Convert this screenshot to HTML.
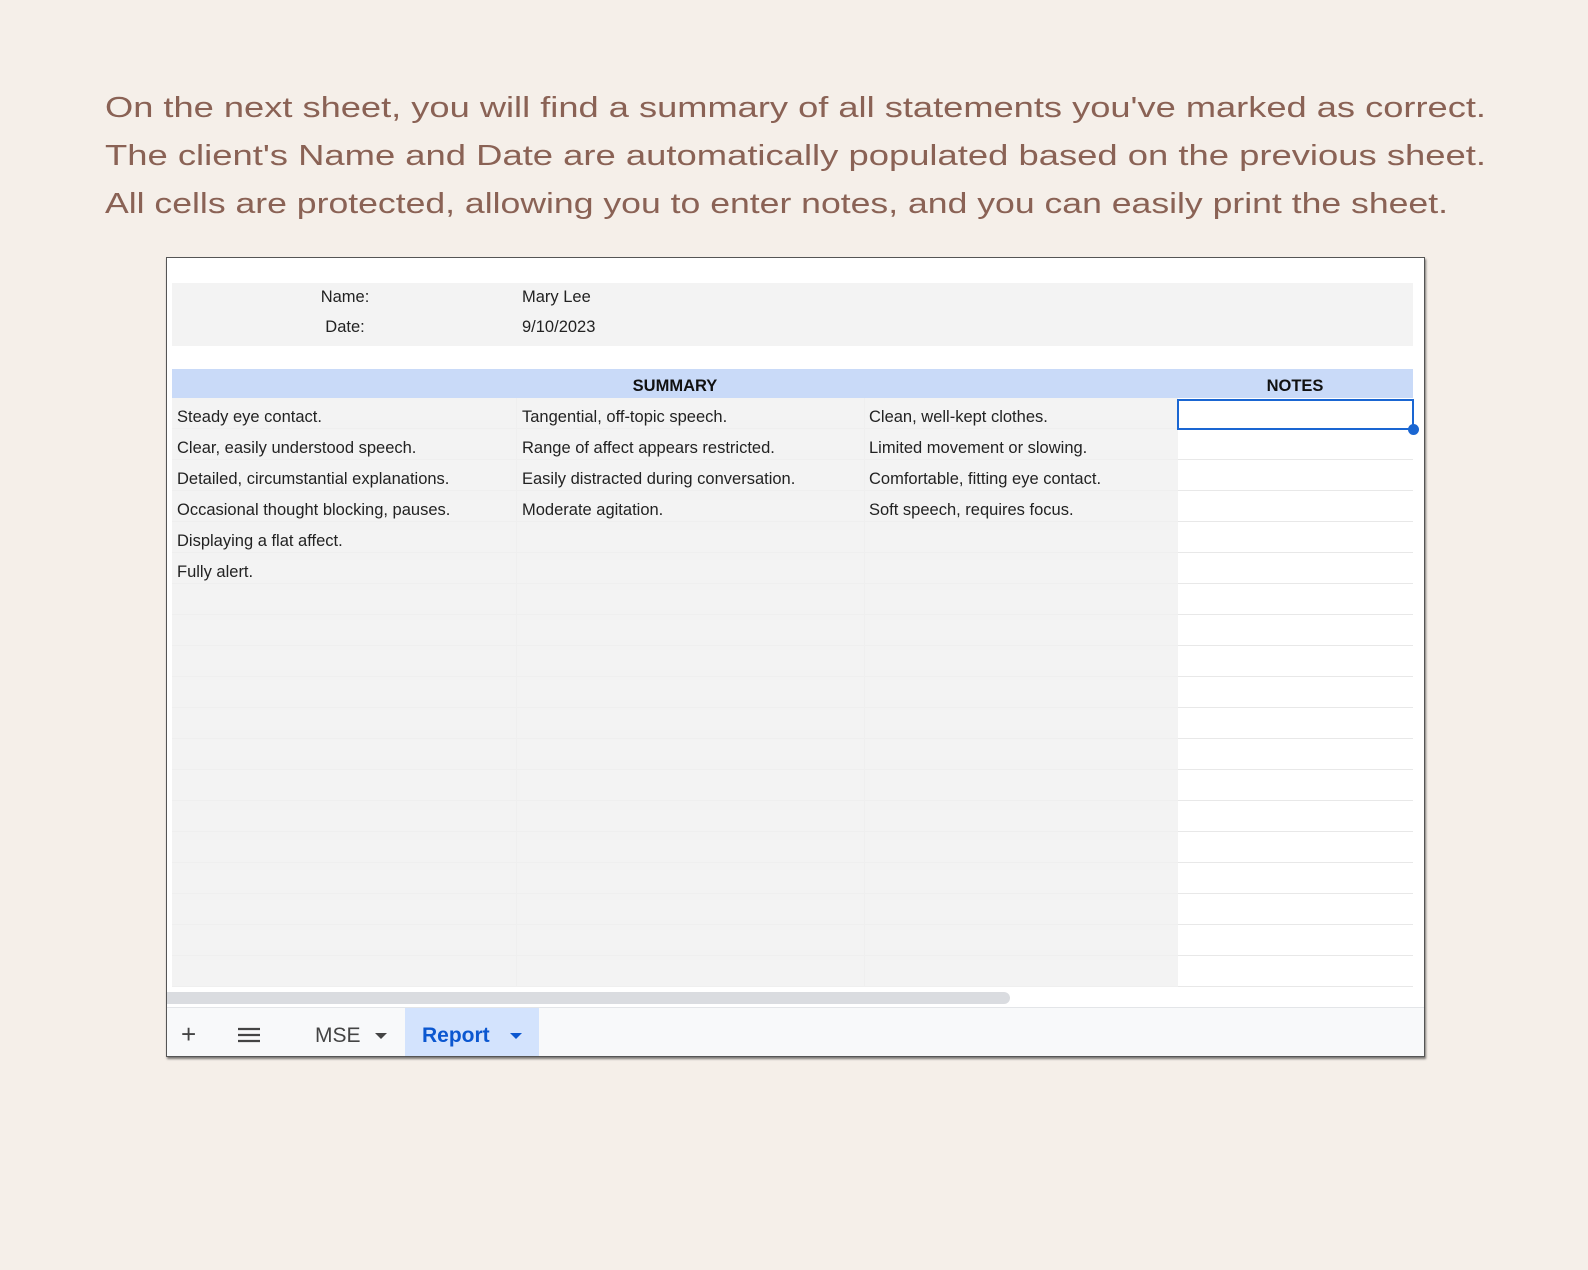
<!DOCTYPE html>
<html><head><meta charset="utf-8"><style>
*{margin:0;padding:0;box-sizing:border-box}
body{width:1588px;height:1270px;background:#f5efe9;position:relative;overflow:hidden;font-family:"Liberation Sans",sans-serif}
.abs{position:absolute}
.frame{left:166px;top:257px;width:1259px;height:800px;background:#fff;border:1px solid #555;box-shadow:1px 2px 2px rgba(0,0,0,.5)}
.cell{position:absolute;font-size:16.5px;color:#222;line-height:31px;white-space:nowrap}
.row{position:absolute;left:172px;width:1006px;height:31px;background:#f3f3f3;border-bottom:1px solid #efefef}
.nrow{position:absolute;left:1178px;width:235px;height:31px;background:#fff;border-bottom:1px solid #e8e8e8}
</style></head><body>
<svg class="abs" style="left:0;top:0" width="1588" height="240">
<g fill="#8a6255" font-family="Liberation Sans, sans-serif" font-size="29">
<text x="105" y="117" textLength="1381" lengthAdjust="spacingAndGlyphs">On the next sheet, you will find a summary of all statements you've marked as correct.</text>
<text x="105" y="165" textLength="1381" lengthAdjust="spacingAndGlyphs">The client's Name and Date are automatically populated based on the previous sheet.</text>
<text x="105" y="213" textLength="1343" lengthAdjust="spacingAndGlyphs">All cells are protected, allowing you to enter notes, and you can easily print the sheet.</text>
</g></svg>
<div class="abs frame"></div>
<div class="abs" style="left:172px;top:283px;width:1241px;height:63px;background:#f3f3f3"></div>
<div class="cell" style="left:300px;width:90px;text-align:center;top:282px">Name:</div>
<div class="cell" style="left:300px;width:90px;text-align:center;top:312px">Date:</div>
<div class="cell" style="left:522px;top:282px">Mary Lee</div>
<div class="cell" style="left:522px;top:312px">9/10/2023</div>
<div class="abs" style="left:172px;top:369px;width:1241px;height:29px;background:#c9daf8"></div>
<div class="cell" style="left:580px;width:190px;text-align:center;top:371px;font-weight:bold;color:#111">SUMMARY</div>
<div class="cell" style="left:1200px;width:190px;text-align:center;top:371px;font-weight:bold;color:#111">NOTES</div>
<div id="rows"></div>
<script>
var h='';for(var i=0;i<19;i++){var t=398+i*31;h+='<div class="row" style="top:'+t+'px"></div><div class="nrow" style="top:'+t+'px"></div>';}
h+='<div class="abs" style="left:516px;top:398px;width:1px;height:589px;background:#efefef"></div><div class="abs" style="left:864px;top:398px;width:1px;height:589px;background:#efefef"></div>';
document.getElementById('rows').innerHTML=h;
</script>
<div class="cell" style="left:177px;top:402px">Steady eye contact.</div>
<div class="cell" style="left:177px;top:433px">Clear, easily understood speech.</div>
<div class="cell" style="left:177px;top:464px">Detailed, circumstantial explanations.</div>
<div class="cell" style="left:177px;top:495px">Occasional thought blocking, pauses.</div>
<div class="cell" style="left:177px;top:526px">Displaying a flat affect.</div>
<div class="cell" style="left:177px;top:557px">Fully alert.</div>
<div class="cell" style="left:522px;top:402px">Tangential, off-topic speech.</div>
<div class="cell" style="left:522px;top:433px">Range of affect appears restricted.</div>
<div class="cell" style="left:522px;top:464px">Easily distracted during conversation.</div>
<div class="cell" style="left:522px;top:495px">Moderate agitation.</div>
<div class="cell" style="left:869px;top:402px">Clean, well-kept clothes.</div>
<div class="cell" style="left:869px;top:433px">Limited movement or slowing.</div>
<div class="cell" style="left:869px;top:464px">Comfortable, fitting eye contact.</div>
<div class="cell" style="left:869px;top:495px">Soft speech, requires focus.</div>
<div class="abs" style="left:1177px;top:399px;width:237px;height:31px;border:2px solid #1a66d2"></div>
<div class="abs" style="left:1408px;top:424px;width:11px;height:11px;border-radius:50%;background:#1a66d2"></div>
<div class="abs" style="left:167px;top:992px;width:843px;height:12px;background:#dadce0;border-radius:0 6px 6px 0"></div>
<div class="abs" style="left:167px;top:1007px;width:1257px;height:49px;background:#f8f9fa;border-top:1px solid #e3e5e8"></div>
<div class="abs" style="left:405px;top:1008px;width:134px;height:48px;background:#d3e3fd"></div>
<div class="abs" style="left:181px;top:1018px;font-size:26px;color:#444;line-height:32px">+</div>
<svg class="abs" style="left:238px;top:1027px" width="24" height="16"><g stroke="#444" stroke-width="2.2"><line x1="0" y1="2" x2="22" y2="2"/><line x1="0" y1="8" x2="22" y2="8"/><line x1="0" y1="14" x2="22" y2="14"/></g></svg>
<div class="abs" style="left:315px;top:1023px;font-size:21px;color:#444;line-height:26px">MSE</div>
<svg class="abs" style="left:375px;top:1033px" width="12" height="7"><path d="M0 0h12L6 6z" fill="#444"/></svg>
<div class="abs" style="left:422px;top:1023px;font-size:21px;color:#0b57d0;font-weight:bold;line-height:26px">Report</div>
<svg class="abs" style="left:510px;top:1033px" width="12" height="7"><path d="M0 0h12L6 6z" fill="#0b57d0"/></svg>
</body></html>
